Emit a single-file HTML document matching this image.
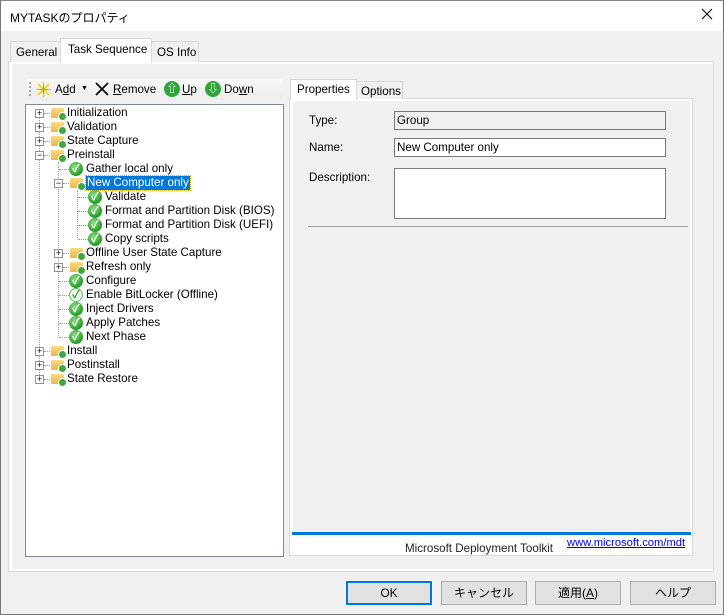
<!DOCTYPE html>
<html><head><meta charset="utf-8"><style>
*{margin:0;padding:0;box-sizing:border-box}
body{width:724px;height:615px;background:#f0f0f0;position:relative;overflow:hidden;font-family:"Liberation Sans","Noto Sans CJK JP",sans-serif;font-size:11.6px;color:#000}
.a{position:absolute}
.win{left:0;top:0;width:724px;height:615px;border:1px solid #777;border-top-color:#888}
.title{left:1px;top:1px;width:721px;height:30px;background:#fff}
.row{position:absolute;height:14px;line-height:14px;white-space:nowrap;font-size:11.6px}
.pb{position:absolute;width:9px;height:9px;border:1px solid #919191;background:#fff;font-size:9px;line-height:7px;text-align:center;color:#000}
.fold{position:absolute;width:13px;height:10px;background:linear-gradient(#f8dc84,#e8b94c);border-radius:1px}
.fold:after{content:"";position:absolute;right:-3px;bottom:-3px;width:7px;height:7px;border-radius:50%;background:#3ea83e;border:1px solid #fff}
.chk{position:absolute;width:14px;height:14px;border-radius:50%;background:radial-gradient(circle at 40% 35%,#8de08a,#229a22 70%);color:#fff;font-size:11px;font-weight:bold;line-height:14px;text-align:center}
.chk.l{background:#e8f7e8;border:1px solid #6bb86b;color:#3a9a3a}
.dl{position:absolute;border-left:1px dotted #999}
.dh{position:absolute;border-top:1px dotted #999;height:0}
.btn{position:absolute;top:581px;width:86px;height:24px;border:1px solid #adadad;background:#e1e1e1;text-align:center;line-height:22px;font-size:12px}
.box{position:absolute;border:1px solid #7a7a7a;background:#fff;padding:2px 2px;line-height:14px}
</style></head><body>
<div class="a win"></div>
<div class="a title"></div>
<div class="a" style="left:10px;top:9px;font-size:12px">MYTASKのプロパティ</div>
<svg class="a" style="left:701px;top:8px" width="12" height="12"><path d="M1 1L11 11M11 1L1 11" stroke="#000" stroke-width="1.1"/></svg>

<div class="a" style="left:8px;top:61px;width:706px;height:511px;border:1px solid #d9d9d9;background:#fff"></div>
<div class="a" style="left:12px;top:64px;width:701px;height:505px;background:#f0f0f0"></div>
<div class="a" style="left:10px;top:41px;width:51px;height:21px;border:1px solid #d9d9d9;border-bottom:none;background:#f0f0f0;padding:4px 0 0 5px">General</div>
<div class="a" style="left:60px;top:38px;width:92px;height:25px;border:1px solid #d9d9d9;border-bottom:none;background:#fff;padding:4px 0 0 7px">Task Sequence</div>
<div class="a" style="left:151px;top:41px;width:48px;height:21px;border:1px solid #d9d9d9;border-bottom:none;background:#f0f0f0;padding:4px 0 0 5px">OS Info</div>

<div class="a" style="left:26px;top:79px;width:256px;height:21px;background:linear-gradient(#f8f8f8,#ececec)"></div>
<div class="a" style="left:29px;top:82px;width:2px;height:14px;border-left:2px dotted #aaa"></div>
<svg class="a" style="left:35px;top:81px" width="17" height="17"><path d="M8.5 1V16M1 8.5H16M3 3L14 14M14 3L3 14" stroke="#e8d000" stroke-width="1.3"/><path d="M8.5 4V13M4 8.5H13" stroke="#777" stroke-width="0.6"/></svg>
<div class="a" style="left:55px;top:83px">A<u>d</u>d</div>
<div class="a" style="left:81px;top:85px;font-size:7px">▼</div>
<svg class="a" style="left:95px;top:82px" width="14" height="14"><path d="M1 1L13 13M13 1L1 13" stroke="#000" stroke-width="1.6"/></svg>
<div class="a" style="left:113px;top:83px"><u>R</u>emove</div>
<div class="a" style="left:164px;top:81px;width:16px;height:16px;border-radius:50%;background:#2fa53a;color:#fff;font-size:11px;text-align:center;line-height:16px;font-weight:bold">⇧</div>
<div class="a" style="left:182px;top:83px"><u>U</u>p</div>
<div class="a" style="left:205px;top:81px;width:16px;height:16px;border-radius:50%;background:#2fa53a;color:#fff;font-size:11px;text-align:center;line-height:16px;font-weight:bold">⇩</div>
<div class="a" style="left:224px;top:83px">Do<u>w</u>n</div>

<div class="a" style="left:25px;top:104px;width:259px;height:453px;border:1px solid #828790;background:#fff"></div>
<div class="dl" style="left:39px;top:117px;height:262px"></div>
<div class="dl" style="left:58px;top:162px;height:174px"></div>
<div class="dl" style="left:77px;top:190px;height:48px"></div>

<div class="pb" style="left:35px;top:109px">+</div><div class="dh" style="left:44px;top:113px;width:6px"></div><div class="fold" style="left:51px;top:108px"></div><div class="row" style="left:67px;top:106px">Initialization</div>
<div class="pb" style="left:35px;top:123px">+</div><div class="dh" style="left:44px;top:127px;width:6px"></div><div class="fold" style="left:51px;top:122px"></div><div class="row" style="left:67px;top:120px">Validation</div>
<div class="pb" style="left:35px;top:137px">+</div><div class="dh" style="left:44px;top:141px;width:6px"></div><div class="fold" style="left:51px;top:136px"></div><div class="row" style="left:67px;top:134px">State Capture</div>
<div class="pb" style="left:35px;top:151px">−</div><div class="dh" style="left:44px;top:155px;width:6px"></div><div class="fold" style="left:51px;top:150px"></div><div class="row" style="left:67px;top:148px">Preinstall</div>

<div class="dh" style="left:59px;top:169px;width:10px"></div><div class="chk" style="left:69px;top:162px">✓</div><div class="row" style="left:86px;top:162px">Gather local only</div>
<div class="pb" style="left:54px;top:179px">−</div><div class="dh" style="left:63px;top:183px;width:6px"></div><div class="fold" style="left:70px;top:178px"></div><div class="row" style="left:86px;top:176px;background:#0078d7;color:#fff;padding:0 1px;outline:1px dotted #f0a000">New Computer only</div>
<div class="dh" style="left:78px;top:197px;width:10px"></div><div class="chk" style="left:88px;top:190px">✓</div><div class="row" style="left:105px;top:190px">Validate</div>
<div class="dh" style="left:78px;top:211px;width:10px"></div><div class="chk" style="left:88px;top:204px">✓</div><div class="row" style="left:105px;top:204px">Format and Partition Disk (BIOS)</div>
<div class="dh" style="left:78px;top:225px;width:10px"></div><div class="chk" style="left:88px;top:218px">✓</div><div class="row" style="left:105px;top:218px">Format and Partition Disk (UEFI)</div>
<div class="dh" style="left:78px;top:239px;width:10px"></div><div class="chk" style="left:88px;top:232px">✓</div><div class="row" style="left:105px;top:232px">Copy scripts</div>
<div class="pb" style="left:54px;top:249px">+</div><div class="dh" style="left:63px;top:253px;width:6px"></div><div class="fold" style="left:70px;top:248px"></div><div class="row" style="left:86px;top:246px">Offline User State Capture</div>
<div class="pb" style="left:54px;top:263px">+</div><div class="dh" style="left:63px;top:267px;width:6px"></div><div class="fold" style="left:70px;top:262px"></div><div class="row" style="left:86px;top:260px">Refresh only</div>
<div class="dh" style="left:59px;top:281px;width:10px"></div><div class="chk" style="left:69px;top:274px">✓</div><div class="row" style="left:86px;top:274px">Configure</div>
<div class="dh" style="left:59px;top:295px;width:10px"></div><div class="chk l" style="left:69px;top:288px;line-height:12px">✓</div><div class="row" style="left:86px;top:288px">Enable BitLocker (Offline)</div>
<div class="dh" style="left:59px;top:309px;width:10px"></div><div class="chk" style="left:69px;top:302px">✓</div><div class="row" style="left:86px;top:302px">Inject Drivers</div>
<div class="dh" style="left:59px;top:323px;width:10px"></div><div class="chk" style="left:69px;top:316px">✓</div><div class="row" style="left:86px;top:316px">Apply Patches</div>
<div class="dh" style="left:59px;top:337px;width:10px"></div><div class="chk" style="left:69px;top:330px">✓</div><div class="row" style="left:86px;top:330px">Next Phase</div>

<div class="pb" style="left:35px;top:347px">+</div><div class="dh" style="left:44px;top:351px;width:6px"></div><div class="fold" style="left:51px;top:346px"></div><div class="row" style="left:67px;top:344px">Install</div>
<div class="pb" style="left:35px;top:361px">+</div><div class="dh" style="left:44px;top:365px;width:6px"></div><div class="fold" style="left:51px;top:360px"></div><div class="row" style="left:67px;top:358px">Postinstall</div>
<div class="pb" style="left:35px;top:375px">+</div><div class="dh" style="left:44px;top:379px;width:6px"></div><div class="fold" style="left:51px;top:374px"></div><div class="row" style="left:67px;top:372px">State Restore</div>

<div class="a" style="left:289px;top:98px;width:404px;height:458px;border:1px solid #d9d9d9;background:#fff"></div>
<div class="a" style="left:293px;top:101px;width:397px;height:431px;background:#f0f0f0"></div>
<div class="a" style="left:292px;top:532px;width:399px;height:3px;background:#0078d7"></div>
<div class="a" style="left:290px;top:79px;width:67px;height:21px;border:1px solid #d9d9d9;border-bottom:none;background:#fff;padding:3px 0 0 6px">Properties</div>
<div class="a" style="left:356px;top:81px;width:47px;height:18px;border:1px solid #d9d9d9;border-bottom:none;background:#f0f0f0;padding:3px 0 0 4px">Options</div>
<div class="a" style="left:309px;top:114px">Type:</div>
<div class="a" style="left:309px;top:141px">Name:</div>
<div class="a" style="left:309px;top:171px">Description:</div>
<div class="box" style="left:394px;top:111px;width:272px;height:19px;background:#f0f0f0">Group</div>
<div class="box" style="left:394px;top:138px;width:272px;height:19px">New Computer only</div>
<div class="box" style="left:394px;top:168px;width:272px;height:51px"></div>
<div class="a" style="left:308px;top:226px;width:380px;height:1px;background:#a0a0a0"></div>
<div class="a" style="left:405px;top:542px;color:#222">Microsoft Deployment Toolkit</div>
<div class="a" style="left:567px;top:537px;color:#00e;text-decoration:underline;font-size:11.2px">www.microsoft.com/mdt</div>

<div class="btn" style="left:346px;border:2px solid #0078d7;line-height:20px">OK</div>
<div class="btn" style="left:441px">キャンセル</div>
<div class="btn" style="left:535px">適用(<u>A</u>)</div>
<div class="btn" style="left:630px">ヘルプ</div>
</body></html>
